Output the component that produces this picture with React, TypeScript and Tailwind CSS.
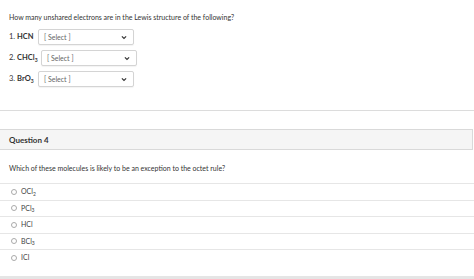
import React from "react";

function Chevron() {
  return (
    <svg width="6" height="5" viewBox="0 0 6 5" className="shrink-0">
      <path d="M0.9 1.3 L3 3.4 L5.1 1.3" fill="none" stroke="#333" strokeWidth="1.2" />
    </svg>
  );
}

function SelectBox({ w }: { w: string }) {
  return (
    <div className={`${w} h-[16px] border border-[#d4d4d4] rounded-[2px] bg-white flex items-center justify-between pl-[5px] pr-[6px] shadow-[0_1px_1px_rgba(0,0,0,0.05)]`}>
      <span className="text-[7px] leading-[9px] text-[#666]">[ Select ]</span>
      <Chevron />
    </div>
  );
}

function Radio({ children }: { children: React.ReactNode }) {
  return (
    <div className="h-[16.5px] border-t border-[#e6e6e6] flex items-center pl-[11px] gap-[4px]">
      <div className="w-[6px] h-[6px] rounded-full border border-[#aaa] bg-white" />
      <span className="text-[7px] leading-[9px] text-[#444]">{children}</span>
    </div>
  );
}

export default function App() {
  return (
    <div
      className="w-[474px] h-[279px] bg-white overflow-hidden text-[#2d3b45] flex flex-col"
      style={{ fontFamily: "Lato, 'Open Sans', sans-serif" }}
    >
      <div className="pl-[9px] pt-[12px]">
        <p className="text-[7px] leading-[10px] text-[#333]">
          How many unshared electrons are in the Lewis structure of the following?
        </p>
        <div className="mt-[7px] flex flex-col gap-[5px]">
          <div className="flex items-center h-[16px]">
            <span className="text-[7.5px] text-[#333] w-[29px]">
              1. <b>HCN</b>
            </span>
            <SelectBox w="w-[96px]" />
          </div>
          <div className="flex items-center h-[16px]">
            <span className="text-[7.5px] text-[#333] w-[32px]">
              2. <b>CHCl<sub className="text-[5px]">3</sub></b>
            </span>
            <SelectBox w="w-[96px]" />
          </div>
          <div className="flex items-center h-[16px]">
            <span className="text-[7.5px] text-[#333] w-[29px]">
              3. <b>BrO<sub className="text-[5px]">3</sub></b>
            </span>
            <SelectBox w="w-[96px]" />
          </div>
        </div>
      </div>
      <div className="mt-[23px] border-t border-[#dcdcdc]" />
      <div className="mt-[18px] h-[21px] bg-[#f5f5f5] border-y border-[#d9d9d9] border-r flex items-center pl-[9px] mr-[1px]">
        <span className="text-[8px] font-bold text-[#333]">Question 4</span>
      </div>
      <div className="pl-[9px] pt-[13px] h-[33px]">
        <p className="text-[7px] leading-[10px] text-[#333]">
          Which of these molecules is likely to be an exception to the octet rule?
        </p>
      </div>
      <div className="flex flex-col">
        <Radio>OCl<sub className="text-[5px]">2</sub></Radio>
        <Radio>PCl<sub className="text-[5px]">3</sub></Radio>
        <Radio>HCl</Radio>
        <Radio>BCl<sub className="text-[5px]">3</sub></Radio>
        <Radio>ICl</Radio>
      </div>
      <div className="flex-1" />
      <div className="h-[3px] bg-[#e5e5e5]" />
    </div>
  );
}
